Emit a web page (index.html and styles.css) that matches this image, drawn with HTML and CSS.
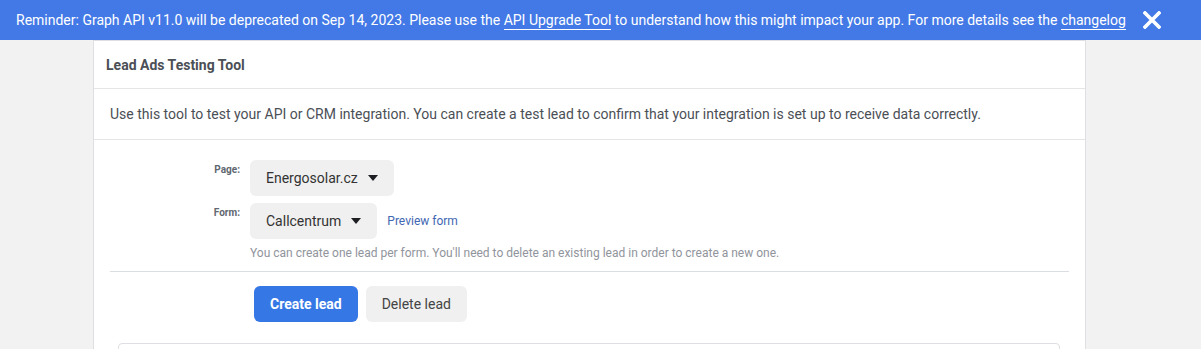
FILE: index.html
```html
<!DOCTYPE html>
<html lang="en">
<head>
    <meta charset="UTF-8">
    <meta name="viewport" content="width=device-width, initial-scale=1.0">
    <title>Lead Ads Testing Tool</title>
    <link rel="stylesheet" href="styles.css">
</head>
<body>

    <div class="banner">
        <span class="banner-text">Reminder: Graph API v11.0 will be deprecated on Sep 14, 2023. Please use the <a href="#">API Upgrade Tool</a> to understand how this might impact your app. For more details see the <a href="#">changelog</a></span>
        <svg class="close" width="18" height="18" viewBox="0 0 18 18">
            <path d="M2 2 L16 16 M16 2 L2 16" stroke="#fff" stroke-width="3.6" stroke-linecap="square"/>
        </svg>
    </div>

    <div class="card">
        <div class="card-header">Lead Ads Testing Tool</div>
        <div class="card-desc">Use this tool to test your API or CRM integration. You can create a test lead to confirm that your integration is set up to receive data correctly.</div>

        <div class="form">
            <div class="row">
                <div class="label">Page:</div>
                <div class="field">
                    <button class="select">Energosolar.cz <span class="caret"></span></button>
                </div>
            </div>
            <div class="row">
                <div class="label">Form:</div>
                <div class="field">
                    <button class="select">Callcentrum <span class="caret"></span></button>
                    <a class="preview" href="#">Preview form</a>
                </div>
            </div>
            <div class="help">You can create one lead per form. You'll need to delete an existing lead in order to create a new one.</div>

            <hr class="divider">

            <div class="actions">
                <button class="btn primary">Create lead</button>
                <button class="btn">Delete lead</button>
            </div>

            <div class="result"></div>
        </div>
    </div>

</body>
</html>
```

FILE: styles.css
```css
html, body {
    height: 100%;
}

body {
    margin: 0;
    font-family: Roboto, Arial, sans-serif;
    background-color: #f2f2f2;
    overflow: hidden;
    display: flex;
    flex-direction: column;
}

.banner {
    height: 40px;
    flex-shrink: 0;
    background-color: #4379e6;
    color: #fff;
    display: flex;
    align-items: center;
    padding-left: 16px;
    font-size: 14px;
}

.banner a {
    color: #fff;
    text-decoration: none;
    border-bottom: 1px solid #fff;
    padding-bottom: 1px;
}

.close {
    margin-left: 17px;
}

.card {
    flex: 1;
    overflow: hidden;
    width: 991px;
    margin-left: 93px;
    background-color: #fff;
    border: 1px solid #dddfe2;
    border-bottom: none;
}

.card-header {
    height: 47px;
    display: flex;
    align-items: center;
    padding-left: 12px;
    font-size: 14px;
    font-weight: bold;
    color: #4b4f56;
    border-bottom: 1px solid #e5e5e5;
}

.card-desc {
    height: 50px;
    display: flex;
    align-items: center;
    padding-left: 16px;
    font-size: 14px;
    color: #4b4f56;
    border-bottom: 1px solid #e5e5e5;
}

.form {
    padding-top: 20px;
}

.row {
    display: grid;
    grid-template-columns: 146px auto;
    column-gap: 10px;
    margin-bottom: 7px;
}

.label {
    text-align: right;
    font-size: 10px;
    font-weight: bold;
    color: #606770;
    padding-top: 4px;
}

.field {
    display: flex;
    align-items: center;
}

.select {
    height: 36px;
    border: none;
    border-radius: 6px;
    background-color: #f0f0f0;
    font-family: Roboto, Arial, sans-serif;
    font-size: 14px;
    color: #333;
    padding: 0 16px;
    display: flex;
    align-items: center;
}

.caret {
    display: inline-block;
    margin-left: 10px;
    width: 0;
    height: 0;
    border-left: 5px solid transparent;
    border-right: 5px solid transparent;
    border-top: 6px solid #1c1e21;
}

.preview {
    margin-left: 10px;
    font-size: 12px;
    color: #4267b2;
    text-decoration: none;
}

.help {
    margin-left: 156px;
    font-size: 12px;
    color: #90949c;
    margin-top: 3px;
}

.divider {
    border: none;
    border-top: 1px solid #dadde1;
    margin: 11px 16px 14px;
}

.actions {
    padding-left: 160px;
    display: flex;
    gap: 8px;
}

.btn {
    height: 36px;
    border: none;
    border-radius: 6px;
    background-color: #f0f0f0;
    font-family: Roboto, Arial, sans-serif;
    font-size: 14px;
    color: #444;
    padding: 0 16px;
}

.btn.primary {
    background-color: #3578e5;
    color: #fff;
    font-weight: bold;
}

.result {
    margin: 21px 25px 0 24px;
    height: 60px;
    border: 1px solid #dddfe2;
    border-radius: 4px;
}
```
